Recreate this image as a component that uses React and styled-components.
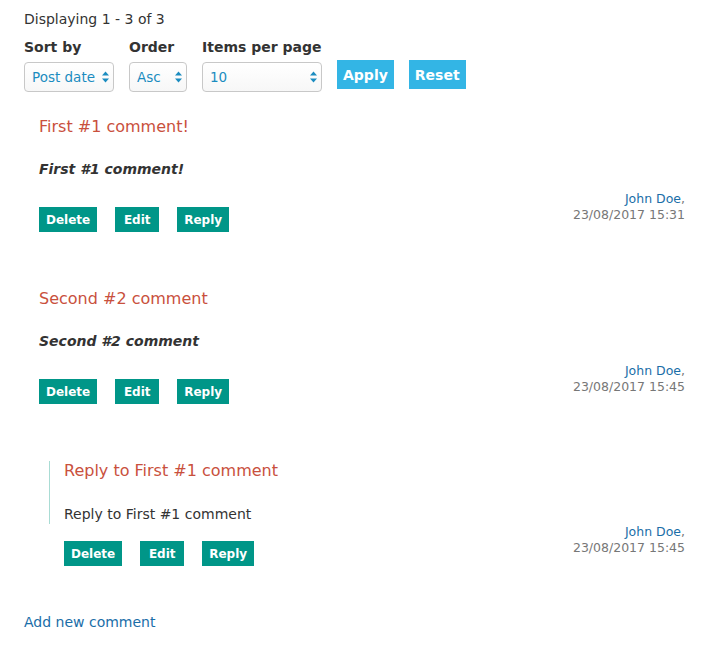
import { createGlobalStyle } from 'styled-components'
import styled from 'styled-components'

const GlobalStyle = createGlobalStyle`
  body {
    margin: 0;
    background: #fff;
    font-family: 'DejaVu Sans', Verdana, sans-serif;
    font-size: 14px;
    color: #333;
  }
`

const Page = styled.div`
  padding: 9px 23px 20px 24px;
`

const Summary = styled.div`
  line-height: 20px;
`

const Filters = styled.form`
  display: flex;
  align-items: flex-end;
  gap: 15px;
  margin-top: 8px;
`

const Field = styled.label`
  display: flex;
  flex-direction: column;
  gap: 5px;
`

const FieldLabel = styled.span`
  font-weight: bold;
  line-height: 20px;
  white-space: nowrap;
`

const SelectWrap = styled.div`
  position: relative;
  width: ${(p) => p.width}px;
`

const Select = styled.select`
  appearance: none;
  width: 100%;
  height: 30px;
  margin: 0;
  padding: 0 12px 0 7px;
  border: 1px solid #c8c8c8;
  border-radius: 4px;
  background: linear-gradient(#ffffff, #f7f7f7);
  font-family: inherit;
  font-size: 13.5px;
  color: #1b8cc0;
  outline: none;
`

const Arrows = styled.svg`
  position: absolute;
  right: 4px;
  top: 9px;
  pointer-events: none;
`

const FilterButton = styled.button`
  height: 29px;
  margin: 0 0 3px;
  padding: 0 6px;
  border: none;
  background: #33b5e5;
  color: #fff;
  font-family: inherit;
  font-size: 14px;
  font-weight: bold;
`

const Comment = styled.div`
  margin-top: ${(p) => p.top}px;
  padding-left: 15px;
`

const Reply = styled.div`
  margin-top: ${(p) => p.top}px;
  padding-left: 25px;
`

const ReplyBody = styled.div`
  border-left: 1px solid #a9dcd4;
  padding-left: 14px;
`

const Title = styled.h3`
  margin: 0;
  font-size: 16px;
  font-weight: normal;
  line-height: 20px;
  color: #c9503d;
`

const Body = styled.div`
  margin-top: ${(p) => (p.plain ? 23 : 22)}px;
  line-height: 20px;
  font-weight: ${(p) => (p.plain ? 'normal' : 'bold')};
  font-style: ${(p) => (p.plain ? 'normal' : 'italic')};
  color: #333;
`

const Footer = styled.div`
  display: flex;
  justify-content: space-between;
  align-items: flex-start;
  margin-top: ${(p) => p.top}px;
  padding-left: ${(p) => p.indent || 0}px;
`

const Actions = styled.div`
  display: flex;
  gap: 18px;
  margin-top: ${(p) => p.top}px;
`

const ActionButton = styled.button`
  min-width: 44px;
  height: 25px;
  padding: 0 7px;
  border: none;
  background: #009688;
  color: #fff;
  font-family: inherit;
  font-size: 12px;
  font-weight: bold;
`

const Meta = styled.div`
  text-align: right;
  font-size: 12.5px;
  line-height: 16px;
  color: #777;
`

const Author = styled.a`
  color: #1a6ea8;
  text-decoration: none;
`

const AddLink = styled.a`
  display: inline-block;
  margin-top: 46px;
  color: #1a6ea8;
  text-decoration: none;
  line-height: 20px;
`

function SortArrows() {
  return (
    <Arrows width="9" height="12" viewBox="0 0 9 12">
      <path d="M4.5 0.5 L8 4.5 L1 4.5 Z" fill="#1b8cc0" />
      <path d="M4.5 11.5 L8 7.5 L1 7.5 Z" fill="#1b8cc0" />
    </Arrows>
  )
}

function Dropdown({ width, value, options }) {
  return (
    <SelectWrap width={width}>
      <Select defaultValue={value}>
        {options.map((o) => (
          <option key={o}>{o}</option>
        ))}
      </Select>
      <SortArrows />
    </SelectWrap>
  )
}

function CommentFooter({ date, top, actionsTop, indent }) {
  return (
    <Footer top={top} indent={indent}>
      <Actions top={actionsTop}>
        <ActionButton>Delete</ActionButton>
        <ActionButton>Edit</ActionButton>
        <ActionButton>Reply</ActionButton>
      </Actions>
      <Meta>
        <Author href="#">John Doe</Author>,
        <br />
        {date}
      </Meta>
    </Footer>
  )
}

export default function App() {
  return (
    <>
      <GlobalStyle />
      <Page>
        <Summary>Displaying 1 - 3 of 3</Summary>
        <Filters onSubmit={(e) => e.preventDefault()}>
          <Field>
            <FieldLabel>Sort by</FieldLabel>
            <Dropdown width={90} value="Post date" options={['Post date', 'Author']} />
          </Field>
          <Field>
            <FieldLabel>Order</FieldLabel>
            <Dropdown width={58} value="Asc" options={['Asc', 'Desc']} />
          </Field>
          <Field>
            <FieldLabel>Items per page</FieldLabel>
            <Dropdown width={120} value="10" options={['10', '20', '50']} />
          </Field>
          <FilterButton type="submit">Apply</FilterButton>
          <FilterButton type="button">Reset</FilterButton>
        </Filters>

        <Comment top={25}>
          <Title>First #1 comment!</Title>
          <Body>First #1 comment!</Body>
          <CommentFooter date="23/08/2017 15:31" top={12} actionsTop={16} />
        </Comment>

        <Comment top={57}>
          <Title>Second #2 comment</Title>
          <Body>Second #2 comment</Body>
          <CommentFooter date="23/08/2017 15:45" top={12} actionsTop={16} />
        </Comment>

        <Reply top={57}>
          <ReplyBody>
            <Title>Reply to First #1 comment</Title>
            <Body plain>Reply to First #1 comment</Body>
          </ReplyBody>
          <CommentFooter date="23/08/2017 15:45" top={0} actionsTop={17} indent={15} />
        </Reply>

        <AddLink href="#">Add new comment</AddLink>
      </Page>
    </>
  )
}
